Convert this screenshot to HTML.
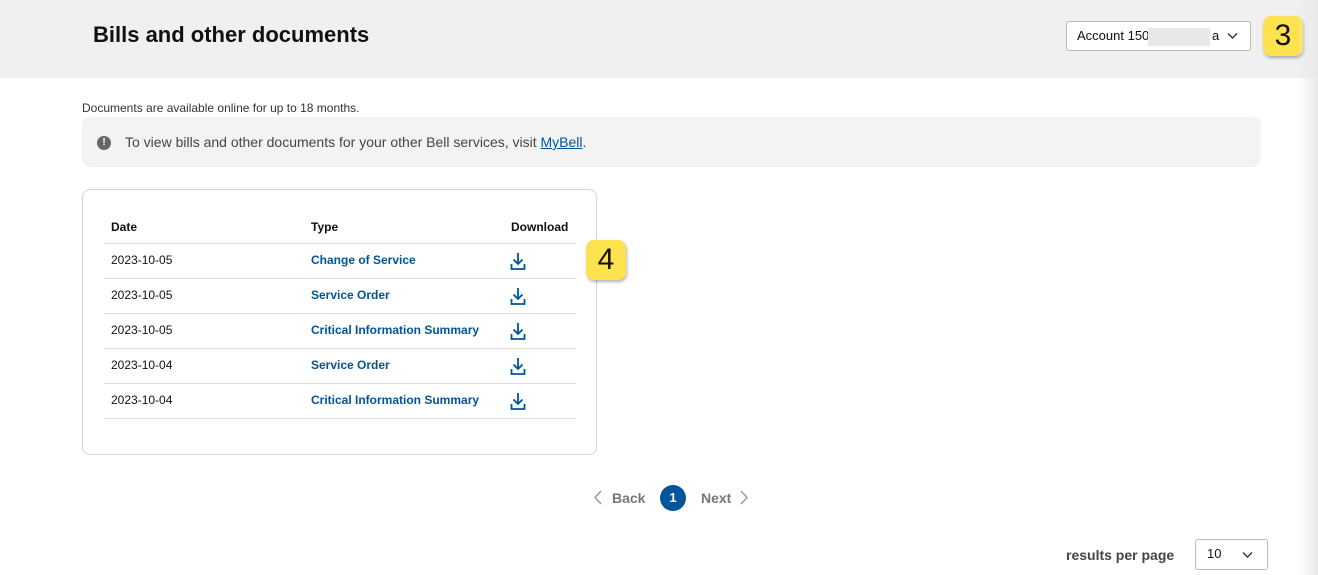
<!DOCTYPE html>
<html><head><style>
*{box-sizing:border-box;margin:0;padding:0}
body{width:1318px;height:575px;overflow:hidden;background:#fff;font-family:"Liberation Sans",Arial,sans-serif;position:relative;color:#111}
.hdr{position:absolute;left:0;top:0;width:1318px;height:78px;background:#f0f0f0}
.hdr h1{position:absolute;left:93px;top:22px;font-size:22px;font-weight:bold;color:#111;letter-spacing:0px}
.acct{position:absolute;left:1066px;top:21px;width:185px;height:30px;background:#fff;border:1px solid #bbb;border-radius:3px;font-size:13px;padding:6px 0 0 10px}
.blur{position:absolute;left:81px;top:6px;width:62px;height:18px;background:#e8e8e8}
.badge{position:absolute;width:40px;height:40px;background:#fde24f;border-radius:8px;box-shadow:1px 2px 3px rgba(0,0,0,.3);font-size:30px;text-align:center;line-height:40px;color:#111}
.edge{position:absolute;right:0;top:0;width:22px;height:575px;background:linear-gradient(to right,rgba(240,240,240,0),#eaeaea)}
.note{position:absolute;left:82px;top:101px;font-size:12px;color:#333}
.info{position:absolute;left:82px;top:117px;width:1179px;height:50px;background:#f3f3f3;border-radius:8px;font-size:14px;color:#444;padding:17px 0 0 43px}
.info a{color:#00549a}
.ico{position:absolute;left:15px;top:19px;width:14px;height:14px;border-radius:50%;background:#666;color:#fff;font-size:10px;font-weight:bold;text-align:center;line-height:14px}
.card{position:absolute;left:82px;top:189px;width:515px;height:266px;border:1px solid #d4d4d4;border-radius:8px}
.row{position:absolute;left:21px;width:472px;height:35px;border-bottom:1px solid #ddd;font-size:12px}
.row span{position:absolute;top:9px}
.c1{left:7px}.c2{left:207px;color:#00549a;font-weight:bold}
.th{font-weight:bold;color:#111}
.pg{position:absolute;top:490px;font-size:14px;font-weight:bold;color:#777}
.cur{position:absolute;left:660px;top:485px;width:26px;height:26px;border-radius:50%;background:#00549a;color:#fff;font-size:13px;font-weight:bold;text-align:center;line-height:26px}
.rpp{position:absolute;left:1066px;top:547px;font-size:14px;font-weight:bold;color:#444}
.sel{position:absolute;left:1195px;top:539px;width:73px;height:31px;border:1px solid #bbb;border-radius:3px;font-size:13px;padding:6px 0 0 11px}
</style></head><body>
<div class="hdr"><h1>Bills and other documents</h1>
<div class="acct">Account 150<span class="blur"></span><span style="position:absolute;left:145px;top:6px">a</span>
<svg style="position:absolute;left:160px;top:10px" width="11" height="8" viewBox="0 0 11 8"><path d="M1 1.5l4.5 4.5 4.5-4.5" fill="none" stroke="#333" stroke-width="1.4"/></svg></div>
</div>
<div class="badge" style="left:1263px;top:16px">3</div>
<div class="note">Documents are available online for up to 18 months.</div>
<div class="info"><span class="ico">!</span>To view bills and other documents for your other Bell services, visit <a href="#">MyBell</a>.</div>
<div class="card">
<div class="row th" style="top:19px"><span class="c1" style="top:11px">Date</span><span style="left:207px;top:11px">Type</span><span style="left:407px;top:11px">Download</span></div>
<div class="row" style="top:54px"><span class="c1">2023-10-05</span><span class="c2">Change of Service</span></div>
<div class="row" style="top:89px"><span class="c1">2023-10-05</span><span class="c2">Service Order</span></div>
<div class="row" style="top:124px"><span class="c1">2023-10-05</span><span class="c2">Critical Information Summary</span></div>
<div class="row" style="top:159px"><span class="c1">2023-10-04</span><span class="c2">Service Order</span></div>
<div class="row" style="top:194px"><span class="c1">2023-10-04</span><span class="c2">Critical Information Summary</span></div>
</div>
<svg width="0" height="0" style="position:absolute"><defs><g id="dl"><path d="M8 1v11M3.5 7.5L8 12l4.5-4.5M1.5 12v5h13v-5" fill="none" stroke="#00549a" stroke-width="1.8"/></g></defs></svg>
<svg style="position:absolute;left:510px;top:252px" width="16" height="19"><use href="#dl"/></svg>
<svg style="position:absolute;left:510px;top:287px" width="16" height="19"><use href="#dl"/></svg>
<svg style="position:absolute;left:510px;top:322px" width="16" height="19"><use href="#dl"/></svg>
<svg style="position:absolute;left:510px;top:357px" width="16" height="19"><use href="#dl"/></svg>
<svg style="position:absolute;left:510px;top:392px" width="16" height="19"><use href="#dl"/></svg>
<div class="badge" style="left:586px;top:240px">4</div>
<svg style="position:absolute;left:593px;top:490px" width="9" height="15"><path d="M8 1L2 7.5 8 14" fill="none" stroke="#999" stroke-width="1.4"/></svg>
<span class="pg" style="left:612px">Back</span>
<div class="cur">1</div>
<span class="pg" style="left:701px">Next</span>
<svg style="position:absolute;left:740px;top:490px" width="9" height="15"><path d="M1 1l6 6.5L1 14" fill="none" stroke="#999" stroke-width="1.4"/></svg>
<div class="rpp">results per page</div>
<div class="sel">10<svg style="position:absolute;left:46px;top:11px" width="11" height="8" viewBox="0 0 11 8"><path d="M1 1.5l4.5 4.5 4.5-4.5" fill="none" stroke="#333" stroke-width="1.4"/></svg></div>
<div class="edge"></div>
</body></html>
